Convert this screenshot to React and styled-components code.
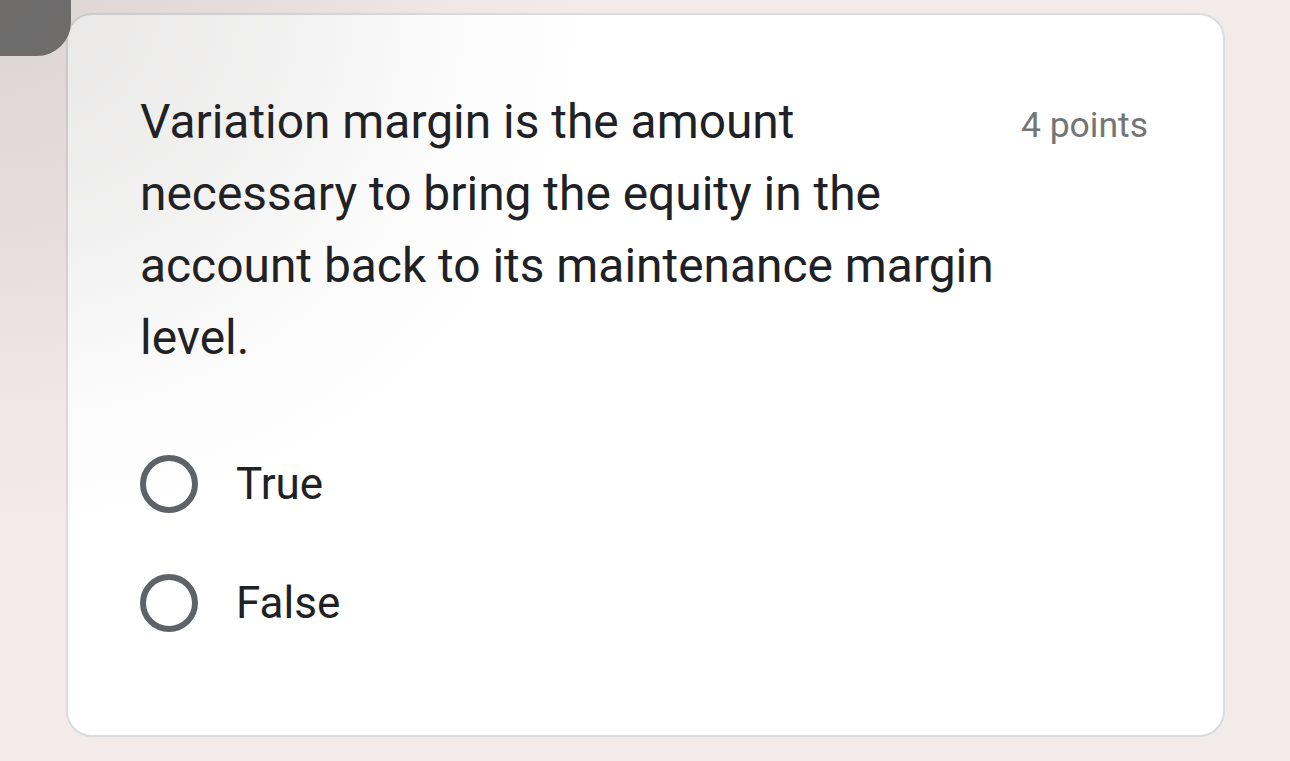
import styled, { createGlobalStyle } from "styled-components";

const GlobalStyle = createGlobalStyle`
  html, body {
    margin: 0;
    padding: 0;
    background: #f3ebea;
    font-family: Roboto, "Liberation Sans", Arial, sans-serif;
  }
`;

const Page = styled.div`
  position: relative;
  width: 1290px;
  height: 761px;
  overflow: hidden;
  padding: 13px 0 0 66px;
  box-sizing: border-box;
`;

const Tab = styled.div`
  position: absolute;
  left: 0;
  top: 0;
  width: 71px;
  height: 56px;
  background: #737373;
  border-bottom-right-radius: 34px;
`;

const Glare = styled.div`
  position: absolute;
  inset: 0;
  pointer-events: none;
  background: radial-gradient(
    ellipse 600px 540px at 0 0,
    rgba(60, 50, 45, 0.12) 0%,
    rgba(60, 50, 45, 0.07) 45%,
    rgba(60, 50, 45, 0.02) 75%,
    rgba(60, 50, 45, 0) 100%
  );
`;

const Card = styled.div`
  width: 1159px;
  height: 724px;
  box-sizing: border-box;
  background: #ffffff;
  border: 2px solid #dadce0;
  border-radius: 26px;
  padding: 71px 75px 0 72px;
`;

const Header = styled.div`
  display: flex;
  justify-content: space-between;
  align-items: flex-start;
`;

const Question = styled.div`
  font-size: 47.9px;
  line-height: 72px;
  color: #202124;
`;

const Points = styled.div`
  font-size: 35.5px;
  line-height: 72px;
  color: #757575;
  padding-top: 3px;
`;

const Options = styled.div`
  display: flex;
  flex-direction: column;
  gap: 61px;
  margin-top: 81px;
`;

const Option = styled.label`
  display: flex;
  align-items: center;
  gap: 38px;
  font-size: 44px;
  color: #202124;
  height: 58px;
`;

const Radio = styled.span`
  width: 58px;
  height: 58px;
  box-sizing: border-box;
  border: 6px solid #5f6368;
  border-radius: 50%;
  flex-shrink: 0;
`;

export default function App() {
  return (
    <>
      <GlobalStyle />
      <Page>
        <Tab />
        <Card>
          <Header>
            <Question>
              Variation margin is the amount
              <br />
              necessary to bring the equity in the
              <br />
              account back to its maintenance margin
              <br />
              level.
            </Question>
            <Points>4 points</Points>
          </Header>
          <Options>
            <Option>
              <Radio />
              True
            </Option>
            <Option>
              <Radio />
              False
            </Option>
          </Options>
        </Card>
        <Glare />
      </Page>
    </>
  );
}
